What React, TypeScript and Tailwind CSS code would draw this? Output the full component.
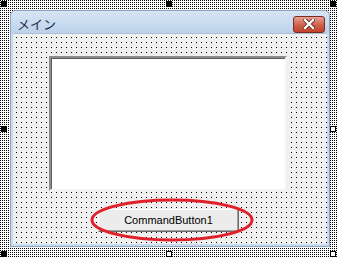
import React from "react";

// VBA UserForm design view: hatched selection frame, form window, listbox and a circled button

function Handle({ filled }: { filled?: boolean }) {
  return <div className={`w-[6px] h-[6px] border border-black ${filled ? "bg-black" : "bg-white"}`} />;
}

export default function App() {
  return (
    <div className="w-[341px] h-[260px] bg-white overflow-hidden">
      {/* hatched selection frame */}
      <div className="relative w-[337px] h-[257px] pt-[10px] pl-[10px] bg-[conic-gradient(from_270deg_at_1px_1px,#000_25%,#fff_0)] bg-[length:2px_2px]">
        {/* form window */}
        <div className="w-[320px] h-[237px] flex flex-col rounded-t-[6px] border border-[#8da2be] bg-[#c9dbef] overflow-hidden">
          {/* title bar */}
          <div className="h-[22px] shrink-0 flex items-center justify-between pl-[6px] pr-[4px] bg-[linear-gradient(#d7e5f4,#bdd3eb)]">
            <span className="mt-[2px] text-[13px] leading-none text-[#1d2a4a] font-['Noto_Sans_CJK_JP',sans-serif]">
              メイン
            </span>
            <div className="w-[32px] h-[17px] mt-[4px] flex items-center justify-center rounded-[3px] border border-[#7a2c20] bg-[linear-gradient(#e8a293,#d06450_50%,#c0402b)]">
              <svg width="12" height="10" viewBox="0 0 12 10">
                <path d="M2 1 L10 9 M10 1 L2 9" stroke="#5a2218" strokeWidth="4" strokeLinecap="square" />
                <path d="M2 1 L10 9 M10 1 L2 9" stroke="#fff" strokeWidth="2.4" strokeLinecap="square" />
              </svg>
            </div>
          </div>

          {/* client area with grid dots */}
          <div className="flex-1 mx-[2px] mb-[2px] border-t border-[#a9bfd8] bg-[#f0f0f0] bg-[conic-gradient(from_270deg_at_1px_1px,#000_25%,#f0f0f0_0)] bg-[length:5px_5px] bg-[position:3px_3px]">
            <div className="relative pt-[22px] pl-[36px]">
              {/* listbox */}
              <div className="w-[238px] h-[135px] bg-white border-2 border-t-[#8c8c8c] border-l-[#8c8c8c] border-r-[#f4f4f4] border-b-[#f4f4f4] shadow-[inset_1px_1px_0_#5e5e5e]" />

              {/* command button */}
              <div className="mt-[18px] ml-[49px] w-[141px] h-[23px] flex items-center justify-center bg-[#ececec] border border-t-white border-l-white border-r-[#6a6a6a] border-b-[#6a6a6a] shadow-[inset_-1px_-1px_0_#a0a0a0]">
                <span className="text-[11px] leading-none text-black font-['Liberation_Sans',sans-serif]">
                  CommandButton1
                </span>
              </div>

              {/* red annotation ellipse */}
              <svg className="absolute left-[77px] top-[163px]" width="164" height="46" viewBox="0 0 164 46">
                <ellipse cx="82" cy="23" rx="80" ry="20" fill="none" stroke="#e0202a" strokeWidth="3" />
              </svg>
            </div>
          </div>
        </div>

        {/* sizing handles */}
        <div className="absolute inset-x-px top-px bottom-0 flex flex-col justify-between">
          <div className="flex justify-between">
            <Handle filled />
            <Handle filled />
            <Handle filled />
          </div>
          <div className="flex justify-between">
            <Handle filled />
            <Handle />
          </div>
          <div className="flex justify-between">
            <Handle filled />
            <Handle />
            <Handle />
          </div>
        </div>
      </div>
    </div>
  );
}
